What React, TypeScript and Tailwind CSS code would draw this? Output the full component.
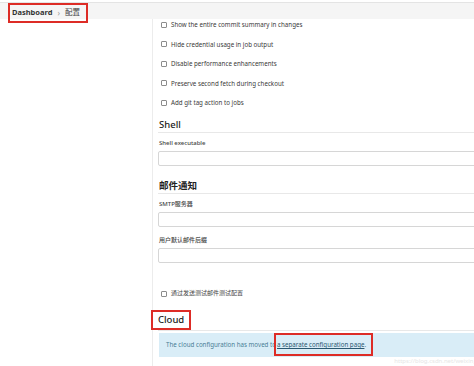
import React from "react";

const checks = [
  "Show the entire commit summary in changes",
  "Hide credential usage in job output",
  "Disable performance enhancements",
  "Preserve second fetch during checkout",
  "Add git tag action to jobs",
];

function Box() {
  return <span className="block w-[6px] h-[6px] border border-[#8c8c8c] rounded-[1px] bg-white shrink-0" />;
}

function Heading({ children, bold }: { children: React.ReactNode; bold?: boolean }) {
  return (
    <div
      className={`border-b border-[#e8e8e8] pl-[1px] pb-[1px] text-[9.5px] leading-[12px] text-[#222] ${
        bold ? "font-bold" : "font-medium"
      }`}
    >
      {children}
    </div>
  );
}

function Field({ label }: { label: string }) {
  return (
    <>
      <div className="pl-[1px] text-[6px] leading-[8px] font-medium text-[#444]">{label}</div>
      <div className="mt-[4px] w-[330px] h-[15px] border border-[#d6d6d6] rounded-[2px] bg-white" />
    </>
  );
}

export default function App() {
  return (
    <div
      className="relative w-[474px] h-[366px] overflow-hidden bg-white text-[#333]"
      style={{ fontFamily: '"Noto Sans", "Noto Sans CJK SC", sans-serif' }}
    >
      {/* breadcrumb bar */}
      <div className="pt-[2px]">
        <div className="relative h-[17px] bg-[#f5f5f5] border-t border-[#e4e4e4]">
          <div className="absolute left-[8px] top-0 h-[20px] w-[80px] border-2 border-[#dd2c26] flex items-center pl-[2px] gap-[5px]">
            <span className="text-[7.5px] font-bold text-[#333]">Dashboard</span>
            <span className="text-[8px] leading-none text-[#999]">›</span>
            <span className="text-[7.5px] text-[#444]">配置</span>
          </div>
        </div>
      </div>

      <div className="flex h-[347px]">
        <div className="w-[153px] shrink-0 border-r border-[#ececec]" />
        <div className="flex-1 pl-[5px] flex flex-col">
          <div className="flex flex-col gap-[9.4px] pt-[1px]">
            {checks.map((c) => (
              <div key={c} className="h-[10px] flex items-center gap-[4px] ml-[3px]">
                <Box />
                <span className="text-[6.2px] text-[#3a3a3a]">{c}</span>
              </div>
            ))}
          </div>

          <div className="mt-[11px]">
            <Heading>Shell</Heading>
          </div>
          <div className="mt-[6px]">
            <Field label="Shell executable" />
          </div>

          <div className="mt-[14px]">
            <Heading bold>邮件通知</Heading>
          </div>
          <div className="mt-[6px]">
            <Field label="SMTP服务器" />
          </div>
          <div className="mt-[9px]">
            <Field label="用户默认邮件后缀" />
          </div>

          <div className="mt-[26px] h-[10px] flex items-center gap-[4px] ml-[3px]">
            <Box />
            <span className="text-[6px] text-[#444]">通过发送测试邮件测试配置</span>
          </div>

          <div className="mt-[6px] border-b border-[#e8e8e8]">
            <span className="-ml-[7px] inline-flex items-center h-[20px] border-2 border-[#dd2c26] pl-[5px] pr-[5px] text-[9.5px] font-medium text-[#222]">
              Cloud
            </span>
          </div>

          <div className="mt-[2px] ml-[1px] w-[330px] h-[24px] bg-[#d9edf7] flex items-center pl-[7px] text-[6.2px] text-[#4a7d96]">
            <span>The cloud configuration has moved to</span>
            <span className="-ml-[2px] inline-flex items-center h-[23px] border-2 border-[#dd2c26] pr-[5px] pl-[1px]">
              <span className="underline text-[#2a5870]">a separate configuration page</span>
              <span>.</span>
            </span>
          </div>

          <div className="mt-[1px] pr-[6px] text-right text-[6px] leading-[7px] text-[#e6e6e6]">
            https://blog.csdn.net/weixin_43
          </div>
        </div>
      </div>
    </div>
  );
}
